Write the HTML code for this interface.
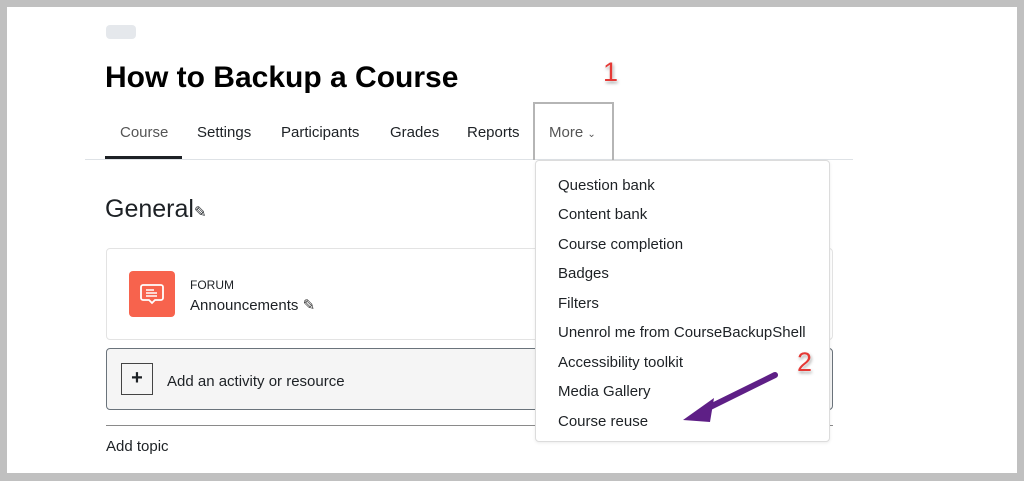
<!DOCTYPE html>
<html><head><style>
*{margin:0;padding:0;box-sizing:border-box}
body{width:1024px;height:481px;background:#c0c0c0;position:relative;overflow:hidden;font-family:"Liberation Sans",sans-serif;color:#1d2125}
#pg{position:absolute;left:7px;top:7px;width:1010px;height:466px;background:#fff}
.a{position:absolute;white-space:nowrap}
.tab{position:absolute;top:124px;font-size:15px;color:#1d2125}
.dd{position:absolute;left:535px;top:160px;width:295px;height:282px;background:#fff;border:1px solid #dcdcdc;border-radius:4px;box-shadow:0 1px 3px rgba(0,0,0,.08)}
.dd div{position:absolute;left:22px;font-size:15px;color:#1d2125}
.num{font-size:27px;color:#e53935;text-shadow:0 0 2px #fff,1px 2px 3px rgba(0,0,0,.4)}
</style></head><body>
<div id="pg"></div>
<div class="a" style="left:106px;top:25px;width:30px;height:14px;background:#e5e8ec;border-radius:4px"></div>
<div class="a" style="left:105px;top:61px;font-size:30px;font-weight:bold;color:#000">How to Backup a Course</div>
<div class="a num" style="left:603px;top:57px">1</div>
<div class="tab" style="left:120px;color:#555">Course</div>
<div class="tab" style="left:197px">Settings</div>
<div class="tab" style="left:281px">Participants</div>
<div class="tab" style="left:390px">Grades</div>
<div class="tab" style="left:467px">Reports</div>
<div class="tab" style="left:549px;color:#555">More <span style="font-size:10px">&#8964;</span></div>
<div class="a" style="left:85px;top:159px;width:768px;height:1px;background:#dee2e6"></div>
<div class="a" style="left:105px;top:156px;width:77px;height:3px;background:#1d2125"></div>
<div class="a" style="left:533px;top:102px;width:81px;height:58px;border:2px solid #b5b5b5;border-bottom:none"></div>
<div class="a" style="left:105px;top:195px;font-size:25px;color:#1d2125">General<span style="font-size:15px">&#9998;</span></div>
<div class="a" style="left:106px;top:248px;width:727px;height:92px;border:1px solid #e3e3e3;border-radius:4px"></div>
<div class="a" style="left:129px;top:271px;width:46px;height:46px;background:#f7634d;border-radius:4px">
<svg width="46" height="46"><path d="M14 14h18a2 2 0 0 1 2 2v11a2 2 0 0 1-2 2h-6l-3 3-3-3h-6a2 2 0 0 1-2-2v-11a2 2 0 0 1 2-2z" fill="none" stroke="#fff" stroke-width="1.8"/><path d="M17 19h8M17 22h11M17 25h11" stroke="#fff" stroke-width="1.5"/></svg></div>
<div class="a" style="left:190px;top:278px;font-size:12px">FORUM</div>
<div class="a" style="left:190px;top:296px;font-size:15px">Announcements <span style="font-size:15px;color:#333">&#9998;</span></div>
<div class="a" style="left:106px;top:348px;width:727px;height:62px;background:#f5f5f5;border:1px solid #6a737b;border-radius:4px"></div>
<div class="a" style="left:121px;top:363px;width:32px;height:32px;border:1px solid #444;background:#f5f5f5;font-size:20px;font-weight:bold;text-align:center;line-height:28px">+</div>
<div class="a" style="left:167px;top:373px;font-size:15px">Add an activity or resource</div>
<div class="a" style="left:106px;top:425px;width:727px;height:1px;background:#8a8a8a"></div>
<div class="a" style="left:106px;top:438px;font-size:15px">Add topic</div>
<div class="dd">
<div style="top:16px">Question bank</div>
<div style="top:45px">Content bank</div>
<div style="top:75px">Course completion</div>
<div style="top:104px">Badges</div>
<div style="top:134px">Filters</div>
<div style="top:163px">Unenrol me from CourseBackupShell</div>
<div style="top:193px">Accessibility toolkit</div>
<div style="top:222px">Media Gallery</div>
<div style="top:252px">Course reuse</div>
</div>
<svg class="a" style="left:680px;top:360px" width="110" height="70"><path d="M95 15 L20 52" stroke="#5e1f86" stroke-width="6" stroke-linecap="round"/><path d="M3 60 L34 38 L30 62 Z" fill="#5e1f86"/></svg>
<div class="a num" style="left:797px;top:347px">2</div>
</body></html>
